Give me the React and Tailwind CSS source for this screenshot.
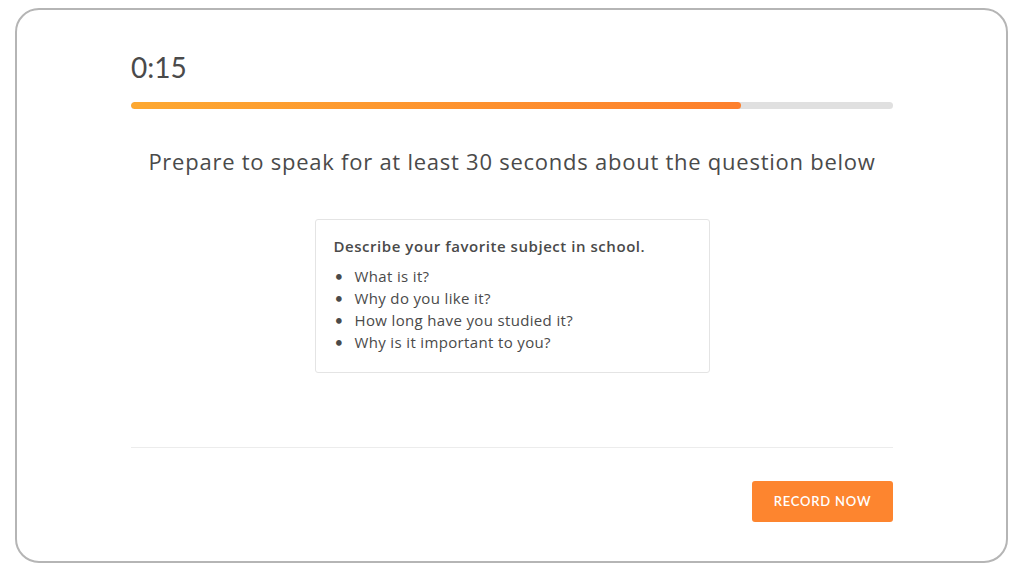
export default function App() {
  const font = { fontFamily: 'Lato, "Noto Sans", sans-serif' };
  const wide = { fontFamily: '"Open Sans", "Noto Sans", sans-serif' };
  return (
    <div className="w-[1024px] h-[571px] bg-white pt-[8px] pl-[15px]" style={font}>
      <div className="w-[993px] h-[555px] border-2 border-[#b5b5b5] rounded-[24px] bg-white pl-[114px] pr-[113px] pt-[40px] flex flex-col">
        <div className="text-[28px] leading-[34px] text-[#4a4a4a]">0:15</div>
        <div className="mt-[18px] h-[7px] w-full rounded-full bg-[#e0e0e0] overflow-hidden">
          <div className="h-full w-[80%] rounded-full bg-gradient-to-r from-[#fda831] to-[#fd7f2c]" />
        </div>
        <div className="mt-[38px] mb-[2px] text-center text-[22px] leading-[28px] tracking-[0.75px] text-[#4a4a4a]" style={wide}>
          Prepare to speak for at least 30 seconds about the question below
        </div>
        <div className="mt-[42px] self-center w-[395px] h-[154px] border border-[#e4e4e4] rounded-[3px] pl-[18px] pt-[16px]" style={wide}>
          <div className="text-[15px] leading-[20px] font-semibold tracking-[0.55px] text-[#4a4a4a]">
            Describe your favorite subject in school.
          </div>
          <ul className="mt-[9px] text-[15px] leading-[22px] tracking-[0.35px] text-[#4a4a4a]">
            {["What is it?", "Why do you like it?", "How long have you studied it?", "Why is it important to you?"].map((t) => (
              <li key={t} className="flex">
                <span className="w-[21px] pl-[1px]" style={font}>•</span>
                <span>{t}</span>
              </li>
            ))}
          </ul>
        </div>
        <div className="mt-[74px] h-px w-full bg-[#ececec]" />
        <div className="mt-[33px] flex justify-end">
          <button className="w-[141px] h-[41px] rounded-[3px] bg-[#fd852f] text-white text-[13px] font-semibold tracking-[0.06em]">
            RECORD NOW
          </button>
        </div>
      </div>
    </div>
  );
}
